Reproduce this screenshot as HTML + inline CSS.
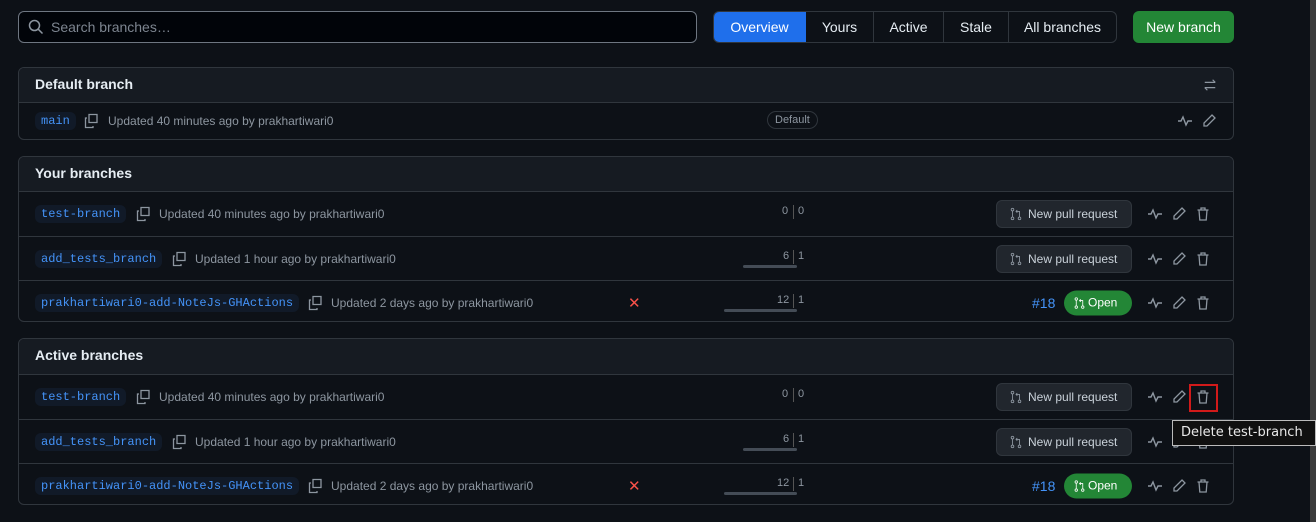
<!DOCTYPE html><html><head><style>
*{box-sizing:border-box;margin:0;padding:0}
body{width:1316px;height:522px;background:#0d1117;font-family:"Liberation Sans",sans-serif;color:#e6edf3;position:relative;overflow:hidden;font-size:14px}
.abs{position:absolute}
.search{left:18px;top:11px;width:679px;height:32px;border:1px solid #6e7681;border-radius:6px;background:#010409;color:#7d8590;font-size:14px;line-height:30px;padding-left:32px}
.tabs{left:713px;top:11px;width:404px;height:32px;border:1px solid #30363d;border-radius:6px;display:flex;overflow:hidden}
.tabs div{line-height:30px;text-align:center;border-right:1px solid #30363d;font-size:14px}
.newb{left:1133px;top:11px;width:101px;height:32px;background:#238636;border-radius:6px;line-height:32px;text-align:center;color:#fff}
.box{left:18px;width:1216px;border:1px solid #30363d;border-radius:6px;overflow:hidden}
.hd{background:#161b22;border-bottom:1px solid #30363d;font-weight:bold;font-size:14px;padding-left:16px;position:relative}
.row{position:relative;border-top:1px solid #30363d}
.hd+.row{border-top:none}
.br{position:absolute;left:16px;top:50%;transform:translateY(-50%);font-family:"Liberation Mono",monospace;font-size:12px;color:#4493f8;background:#111a28;padding:2px 6px;border-radius:6px}
.upd{position:absolute;top:50%;transform:translateY(-50%);font-size:12px;color:#8d96a0}
.copy{position:absolute;top:50%;transform:translateY(-50%)}
.npr{position:absolute;left:977px;width:136px;height:28px;top:50%;transform:translateY(-50%);background:#21262d;border:1px solid #30363d;border-radius:6px;font-size:12px;color:#c9d1d9;line-height:26px;padding-left:31px}
.icons{position:absolute;left:1128px;top:50%;transform:translateY(-50%);display:flex;gap:8px}
.ab{position:absolute;top:50%;font-size:11px;color:#8d96a0}
.bar{position:absolute;height:3px;background:#444c56;border-radius:2px}
.open{position:absolute;left:1045px;width:68px;height:25px;top:50%;transform:translateY(-50%);background:#238636;border-radius:13px;color:#fff;font-size:12px;line-height:25px;padding-left:24px}
.num{position:absolute;left:1013px;top:50%;transform:translateY(-50%);color:#4493f8;font-size:14px}
.x{position:absolute;left:609px;top:50%;transform:translateY(-50%);color:#f85149;font-size:15px}
</style></head><body>
<div class="abs search">Search branches…</div>
<svg class="abs" style="left:28px;top:19px" width="16" height="16" viewBox="0 0 16 16"><circle cx="6.5" cy="6.5" r="5" fill="none" stroke="#8d96a0" stroke-width="1.5"/><path d="M10.2 10.2L14.5 14.5" stroke="#8d96a0" stroke-width="1.5"/></svg>
<div class="abs tabs"><div style="width:92px;background:#1f6feb;color:#fff;border-color:#1f6feb">Overview</div><div style="width:68px">Yours</div><div style="width:70px">Active</div><div style="width:65px">Stale</div><div style="width:107px;border:none">All branches</div></div>
<div class="abs newb">New branch</div>
<div class="abs" style="left:1310px;top:0;width:6px;height:522px;background:#3b3b3b"></div>

<svg width="0" height="0" style="position:absolute"><defs>
<symbol id="cp" viewBox="0 0 16 16"><path d="M4 5H2.5v9.5H10V13M6 1.5h8v8H6z" fill="none" stroke="#8d96a0" stroke-width="1.3"/></symbol>
<symbol id="pl" viewBox="0 0 16 16"><path d="M1 8h3l2-4 3 8 2-4h4" fill="none" stroke="#8d96a0" stroke-width="1.4"/></symbol>
<symbol id="pn" viewBox="0 0 16 16"><path d="M11 2l3 3-8 8H3v-3z" fill="none" stroke="#8d96a0" stroke-width="1.3"/></symbol>
<symbol id="tr" viewBox="0 0 16 16"><path d="M2.5 4h11M6 4V2h4v2M4 4l.8 10h6.4L12 4" fill="none" stroke="#8d96a0" stroke-width="1.3"/></symbol>
<symbol id="pr" viewBox="0 0 16 16"><circle cx="4" cy="3" r="1.5" fill="none" stroke="currentColor"/><circle cx="4" cy="13" r="1.5" fill="none" stroke="currentColor"/><circle cx="12" cy="13" r="1.5" fill="none" stroke="currentColor"/><path d="M4 4.5v7M12 11.5V5H8M9.5 3.5L8 5l1.5 1.5" fill="none" stroke="currentColor"/></symbol>
</defs></svg>

<div class="abs box" style="top:67px;height:73px">
<div class="hd" style="height:35px;line-height:33px">Default branch<svg style="position:absolute;right:16px;top:10px" width="14" height="14" viewBox="0 0 16 16"><path d="M2 5h12M11 2l3 3M14 11H2M5 14l-3-3" fill="none" stroke="#8d96a0" stroke-width="1.4"/></svg></div>
<div class="row" style="height:36px"><span class="br">main</span><svg class="copy" style="left:64px" width="16" height="16"><use href="#cp"/></svg><span class="upd" style="left:89px">Updated 40 minutes ago by prakhartiwari0</span><span style="position:absolute;left:748px;top:8px;border:1px solid #30363d;border-radius:10px;font-size:11px;color:#8d96a0;padding:2px 7px">Default</span><div class="icons" style="left:1158px"><svg width="16" height="16"><use href="#pl"/></svg><svg width="16" height="16"><use href="#pn"/></svg></div></div>
</div>

<div class="abs box" style="top:156px;height:166px">
<div class="hd" style="height:35px;line-height:33px">Your branches</div>
<div class="row" style="height:44px"><span class="br">test-branch</span><svg class="copy" style="left:116px" width="16" height="16"><use href="#cp"/></svg><span class="upd" style="left:140px">Updated 40 minutes ago by prakhartiwari0</span><span class="ab" style="left:763px;top:13px">0</span><span class="ab" style="left:779px;top:13px">0</span><div class="abs" style="left:774px;top:13px;width:1px;height:14px;background:#555"></div><div class="npr"><svg style="position:absolute;left:12px;top:6px;color:#8d96a0" width="14" height="14"><use href="#pr"/></svg>New pull request</div><div class="icons"><svg width="16" height="16"><use href="#pl"/></svg><svg width="16" height="16"><use href="#pn"/></svg><svg width="16" height="16"><use href="#tr"/></svg></div></div>
<div class="row" style="height:44px"><span class="br">add_tests_branch</span><svg class="copy" style="left:152px" width="16" height="16"><use href="#cp"/></svg><span class="upd" style="left:176px">Updated 1 hour ago by prakhartiwari0</span><span class="ab" style="left:764px;top:13px">6</span><span class="ab" style="left:779px;top:13px">1</span><div class="abs" style="left:774px;top:13px;width:1px;height:14px;background:#555"></div><div class="bar" style="left:724px;top:28px;width:54px"></div><div class="npr"><svg style="position:absolute;left:12px;top:6px;color:#8d96a0" width="14" height="14"><use href="#pr"/></svg>New pull request</div><div class="icons"><svg width="16" height="16"><use href="#pl"/></svg><svg width="16" height="16"><use href="#pn"/></svg><svg width="16" height="16"><use href="#tr"/></svg></div></div>
<div class="row" style="height:44px"><span class="br">prakhartiwari0-add-NoteJs-GHActions</span><svg class="copy" style="left:288px" width="16" height="16"><use href="#cp"/></svg><span class="upd" style="left:312px">Updated 2 days ago by prakhartiwari0</span><span class="x">✕</span><span class="ab" style="left:758px;top:13px">12</span><span class="ab" style="left:779px;top:13px">1</span><div class="abs" style="left:774px;top:13px;width:1px;height:14px;background:#555"></div><div class="bar" style="left:705px;top:28px;width:73px"></div><span class="num">#18</span><div class="open"><svg style="position:absolute;left:9px;top:6px;color:#fff" width="13" height="13"><use href="#pr"/></svg>Open</div><div class="icons"><svg width="16" height="16"><use href="#pl"/></svg><svg width="16" height="16"><use href="#pn"/></svg><svg width="16" height="16"><use href="#tr"/></svg></div></div>
</div>

<div class="abs box" style="top:338px;height:167px">
<div class="hd" style="height:36px;line-height:33px">Active branches</div>
<div class="row" style="height:44px"><span class="br">test-branch</span><svg class="copy" style="left:116px" width="16" height="16"><use href="#cp"/></svg><span class="upd" style="left:140px">Updated 40 minutes ago by prakhartiwari0</span><span class="ab" style="left:763px;top:13px">0</span><span class="ab" style="left:779px;top:13px">0</span><div class="abs" style="left:774px;top:13px;width:1px;height:14px;background:#555"></div><div class="npr"><svg style="position:absolute;left:12px;top:6px;color:#8d96a0" width="14" height="14"><use href="#pr"/></svg>New pull request</div><div class="icons"><svg width="16" height="16"><use href="#pl"/></svg><svg width="16" height="16"><use href="#pn"/></svg><svg width="16" height="16"><use href="#tr"/></svg></div><div class="abs" style="left:1170px;top:9px;width:29px;height:28px;border:2px solid #d11a1a"></div></div>
<div class="row" style="height:44px"><span class="br">add_tests_branch</span><svg class="copy" style="left:152px" width="16" height="16"><use href="#cp"/></svg><span class="upd" style="left:176px">Updated 1 hour ago by prakhartiwari0</span><span class="ab" style="left:764px;top:13px">6</span><span class="ab" style="left:779px;top:13px">1</span><div class="abs" style="left:774px;top:13px;width:1px;height:14px;background:#555"></div><div class="bar" style="left:724px;top:28px;width:54px"></div><div class="npr"><svg style="position:absolute;left:12px;top:6px;color:#8d96a0" width="14" height="14"><use href="#pr"/></svg>New pull request</div><div class="icons"><svg width="16" height="16"><use href="#pl"/></svg><svg width="16" height="16"><use href="#pn"/></svg><svg width="16" height="16"><use href="#tr"/></svg></div></div>
<div class="row" style="height:44px"><span class="br">prakhartiwari0-add-NoteJs-GHActions</span><svg class="copy" style="left:288px" width="16" height="16"><use href="#cp"/></svg><span class="upd" style="left:312px">Updated 2 days ago by prakhartiwari0</span><span class="x">✕</span><span class="ab" style="left:758px;top:13px">12</span><span class="ab" style="left:779px;top:13px">1</span><div class="abs" style="left:774px;top:13px;width:1px;height:14px;background:#555"></div><div class="bar" style="left:705px;top:28px;width:73px"></div><span class="num">#18</span><div class="open"><svg style="position:absolute;left:9px;top:6px;color:#fff" width="13" height="13"><use href="#pr"/></svg>Open</div><div class="icons"><svg width="16" height="16"><use href="#pl"/></svg><svg width="16" height="16"><use href="#pn"/></svg><svg width="16" height="16"><use href="#tr"/></svg></div></div>
</div>

<div class="abs" style="left:1172px;top:420px;width:144px;height:26px;background:#101010;border:1px solid #bbb;color:#e8e8e8;font-family:'DejaVu Sans',sans-serif;font-size:13px;line-height:24px;padding-left:8px;white-space:nowrap">Delete test-branch</div>
</body></html>
